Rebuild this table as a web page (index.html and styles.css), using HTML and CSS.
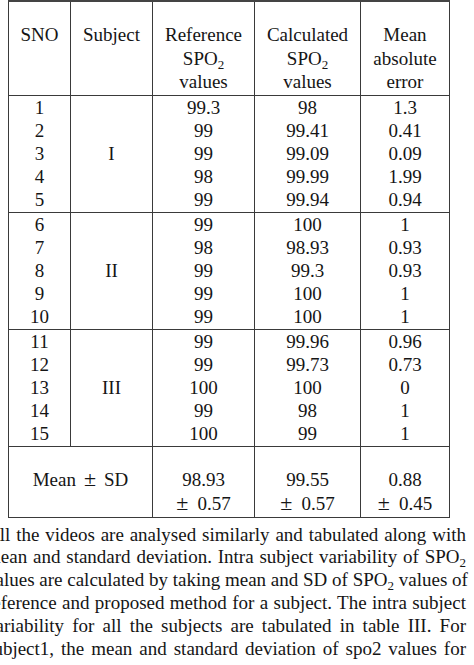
FILE: index.html
```html
<!DOCTYPE html>
<html>
<head>
<meta charset="utf-8">
<link rel="stylesheet" href="styles.css">
</head>
<body>
<table class="results">
  <colgroup>
    <col class="c-sno"><col class="c-subj"><col class="c-ref"><col class="c-calc"><col class="c-mae">
  </colgroup>
  <thead>
    <tr>
      <th>SNO</th>
      <th>Subject</th>
      <th>Reference<br>SPO<sub>2</sub><br>values</th>
      <th>Calculated<br>SPO<sub>2</sub><br>values</th>
      <th>Mean<br>absolute<br>error</th>
    </tr>
  </thead>
  <tbody class="group">
    <tr><td>1</td><td class="subj" rowspan="5">I</td><td>99.3</td><td>98</td><td>1.3</td></tr>
    <tr><td>2</td><td>99</td><td>99.41</td><td>0.41</td></tr>
    <tr><td>3</td><td>99</td><td>99.09</td><td>0.09</td></tr>
    <tr><td>4</td><td>98</td><td>99.99</td><td>1.99</td></tr>
    <tr><td>5</td><td>99</td><td>99.94</td><td>0.94</td></tr>
  </tbody>
  <tbody class="group">
    <tr><td>6</td><td class="subj" rowspan="5">II</td><td>99</td><td>100</td><td>1</td></tr>
    <tr><td>7</td><td>98</td><td>98.93</td><td>0.93</td></tr>
    <tr><td>8</td><td>99</td><td>99.3</td><td>0.93</td></tr>
    <tr><td>9</td><td>99</td><td>100</td><td>1</td></tr>
    <tr><td>10</td><td>99</td><td>100</td><td>1</td></tr>
  </tbody>
  <tbody class="group">
    <tr><td>11</td><td class="subj" rowspan="5">III</td><td>99</td><td>99.96</td><td>0.96</td></tr>
    <tr><td>12</td><td>99</td><td>99.73</td><td>0.73</td></tr>
    <tr><td>13</td><td>100</td><td>100</td><td>0</td></tr>
    <tr><td>14</td><td>99</td><td>98</td><td>1</td></tr>
    <tr><td>15</td><td>100</td><td>99</td><td>1</td></tr>
  </tbody>
  <tbody class="group summary">
    <tr>
      <td colspan="2">Mean<span class="pm">±</span>SD</td>
      <td>98.93<br><span class="pm lead">±</span>0.57</td>
      <td>99.55<br><span class="pm lead">±</span>0.57</td>
      <td>0.88<br><span class="pm lead">±</span>0.45</td>
    </tr>
  </tbody>
</table>
<div class="para">
  <div class="line">All the videos are analysed similarly and tabulated along with</div>
  <div class="line">mean and standard deviation. Intra subject variability of SPO<sub>2</sub></div>
  <div class="line">values are calculated by taking mean and SD of SPO<sub>2</sub> values of</div>
  <div class="line">reference and proposed method for a subject. The intra subject</div>
  <div class="line">variability for all the subjects are tabulated in table III. For</div>
  <div class="line">subject1, the mean and standard deviation of spo2 values for</div>
</div>
</body>
</html>
```

FILE: styles.css
```css
html, body {
  margin: 0;
  padding: 0;
  background: #fff;
  overflow: hidden;
}
body {
  font-family: "Liberation Serif", "Times New Roman", serif;
  font-size: 19px;
  color: #151515;
}
.results {
  margin-left: 8px;
  border-collapse: collapse;
  width: 441px;
  table-layout: fixed;
  border-top: 2px solid #444;
  border-bottom: 1px solid #3a3a3a;
}
.c-sno { width: 62px; }
.c-subj { width: 82px; }
.c-ref { width: 102px; }
.c-calc { width: 106px; }
.c-mae { width: 89px; }
.results th,
.results td {
  border-left: 1px solid #3a3a3a;
  border-right: 1px solid #3a3a3a;
  text-align: center;
  padding: 0;
  line-height: 23.2px;
  font-weight: normal;
}
.results th {
  vertical-align: top;
  padding-top: 21px;
  padding-bottom: 1px;
  line-height: 23.5px;
}
.results thead {
  border-bottom: 1px solid #3a3a3a;
}
.group {
  border-top: 1px solid #3a3a3a;
}
.subj {
  vertical-align: middle;
}
.summary td {
  vertical-align: top;
  padding-top: 21px;
  padding-bottom: 1px;
  line-height: 24px;
}
.pm {
  font-size: 22px;
  line-height: 0;
  margin: 0 8px;
}
.pm.lead {
  margin: 0 9px 0 0;
}
sub {
  font-size: 13px;
  line-height: 0;
  vertical-align: -4px;
}
.para {
  margin-top: 6px;
  margin-left: -14px;
  width: 480px;
}
.line {
  text-align: justify;
  text-align-last: justify;
  line-height: 22.9px;
  white-space: nowrap;
}
```
